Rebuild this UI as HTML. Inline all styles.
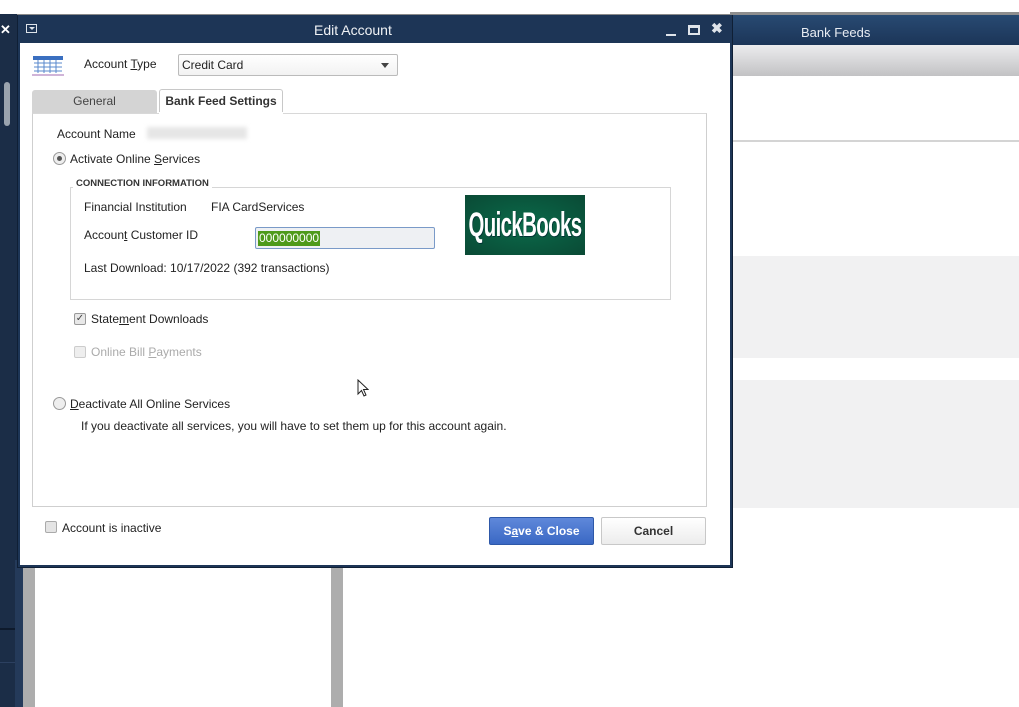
<!DOCTYPE html>
<html><head><meta charset="utf-8"><style>
*{margin:0;padding:0;box-sizing:border-box}
body{width:1019px;height:707px;position:relative;overflow:hidden;background:#fff;font-family:"Liberation Sans",Arial,sans-serif;font-size:12px;color:#222}
.a{position:absolute}
u{text-decoration:underline}
</style></head><body>
<div class="a" style="left:0;top:0;width:1019px;height:14px;background:#fff"></div>
<div class="a" style="left:0;top:14px;width:18px;height:693px;background:#1b2d47"></div>
<div class="a" style="left:0;top:22px;width:10px;height:20px;color:#fff;font-size:13px;font-weight:bold">✕</div>
<div class="a" style="left:4px;top:82px;width:6px;height:44px;background:#9aa3ae;border-radius:3px"></div>
<div class="a" style="left:0;top:628px;width:18px;height:2px;background:#0e1a2c"></div>
<div class="a" style="left:0;top:662px;width:18px;height:1px;background:#2c4060"></div>
<div class="a" style="left:15px;top:560px;width:8px;height:147px;background:#243a5a"></div>
<div class="a" style="left:23px;top:560px;width:12px;height:147px;background:#adadad"></div>
<div class="a" style="left:331px;top:560px;width:12px;height:147px;background:#adadad"></div>
<div class="a" style="left:730px;top:12px;width:289px;height:3px;background:#8e8e8e"></div>
<div class="a" style="left:730px;top:15px;width:289px;height:30px;background:linear-gradient(#284a72,#1c3558)"></div>
<div class="a" style="left:801px;top:25px;color:#e8ecf2;font-size:13px">Bank Feeds</div>
<div class="a" style="left:732px;top:45px;width:287px;height:31px;background:linear-gradient(#ececee,#c2c2c4)"></div>
<div class="a" style="left:732px;top:140px;width:287px;height:2px;background:#d4d4d4"></div>
<div class="a" style="left:732px;top:256px;width:287px;height:102px;background:#f1f1f2"></div>
<div class="a" style="left:732px;top:380px;width:287px;height:128px;background:#f1f1f2"></div>
<div class="a" style="left:17px;top:14px;width:716px;height:554px;background:#1d3556;border:1px solid #0f1f35"></div>
<div class="a" style="left:17px;top:14px;width:716px;height:1px;background:#8a8a8a"></div>
<div class="a" style="left:26px;top:24px;width:11px;height:9px;border:1px solid #dde3ea;"></div>
<div class="a" style="left:29px;top:27px;width:0;height:0;border-left:3px solid transparent;border-right:3px solid transparent;border-top:3px solid #dde3ea"></div>
<div class="a" style="left:314px;top:22px;color:#f0f2f5;font-size:14px">Edit Account</div>
<div class="a" style="left:666px;top:34px;width:10px;height:2px;background:#dfe4ea"></div>
<div class="a" style="left:688px;top:25px;width:12px;height:10px;border:2px solid #dfe4ea;border-top-width:3px"></div>
<div class="a" style="left:711px;top:20px;color:#dfe4ea;font-size:14px;font-weight:bold">✖</div>
<div class="a" style="left:20px;top:43px;width:710px;height:522px;background:#fff"></div>
<svg class="a" style="left:32px;top:54px" width="32" height="22"><rect x="1" y="2" width="30" height="4" fill="#3a6fc0"/><g stroke="#5a88cc" stroke-width="1"><line x1="2" y1="9" x2="30" y2="9"/><line x1="2" y1="13" x2="30" y2="13"/><line x1="2" y1="17" x2="30" y2="17"/><line x1="6" y1="6" x2="6" y2="19"/><line x1="12" y1="6" x2="12" y2="19"/><line x1="18" y1="6" x2="18" y2="19"/><line x1="24" y1="6" x2="24" y2="19"/></g><line x1="0" y1="21" x2="32" y2="21" stroke="#a06ab0"/></svg>
<div class="a" style="left:84px;top:57px">Account <u>T</u>ype</div>
<div class="a" style="left:178px;top:54px;width:220px;height:22px;border:1px solid #bbb;border-radius:2px;background:linear-gradient(#fff,#f2f2f2);padding:3px 0 0 3px;font-size:12px">Credit Card</div>
<div class="a" style="left:381px;top:63px;border-left:4px solid transparent;border-right:4px solid transparent;border-top:5px solid #444"></div>
<div class="a" style="left:32px;top:90px;width:125px;height:23px;background:#d4d4d4;border-radius:3px 3px 0 0;text-align:center;padding-top:4px;color:#444">General</div>
<div class="a" style="left:159px;top:89px;width:124px;height:25px;background:#fff;border:1px solid #c8c8c8;border-bottom:none;border-radius:3px 3px 0 0;text-align:center;padding-top:4px;font-weight:bold;color:#333">Bank Feed Settings</div>
<div class="a" style="left:32px;top:113px;width:675px;height:394px;border:1px solid #cfcfcf;border-top-color:#d8d8d8"></div>
<div class="a" style="left:159px;top:112px;width:124px;height:2px;background:#fff"></div>
<div class="a" style="left:57px;top:127px">Account Name</div>
<div class="a" style="left:147px;top:127px;width:100px;height:12px;background:#e6e6e6;filter:blur(2px)"></div>
<div class="a" style="left:53px;top:152px;width:13px;height:13px;border:1px solid #999;border-radius:50%;background:#eee"></div>
<div class="a" style="left:57px;top:156px;width:5px;height:5px;border-radius:50%;background:#555"></div>
<div class="a" style="left:70px;top:152px">Activate Online <u>S</u>ervices</div>
<div class="a" style="left:70px;top:187px;width:601px;height:113px;border:1px solid #d6d6d6"></div>
<div class="a" style="left:73px;top:178px;background:#fff;padding:0 3px;font-size:9.5px;font-weight:bold;color:#333">CONNECTION INFORMATION</div>
<div class="a" style="left:84px;top:200px">Financial Institution</div>
<div class="a" style="left:211px;top:200px">FIA CardServices</div>
<div class="a" style="left:84px;top:228px">Accoun<u>t</u> Customer ID</div>
<div class="a" style="left:255px;top:227px;width:180px;height:22px;border:1px solid #7a9ac8;border-radius:2px;background:#eef0f3"></div>
<div class="a" style="left:258px;top:231px;height:15px;background:#4e9a1a;color:#fff;padding:0 1px;font-size:12px;line-height:15px">000000000</div>
<div class="a" style="left:84px;top:261px">Last Download: 10/17/2022 (392 transactions)</div>
<div class="a" style="left:465px;top:195px;width:120px;height:60px;background:radial-gradient(#0b6a4a,#0a4a35);overflow:hidden">
<div style="position:absolute;left:-40px;top:0;width:200px;text-align:center;color:#fff;font-weight:bold;font-size:34px;line-height:60px;letter-spacing:-1px;transform:scaleX(0.6);text-shadow:1px 1px 0 #033">QuickBooks</div></div>
<div class="a" style="left:74px;top:313px;width:12px;height:12px;border:1px solid #999;border-radius:2px;background:#e8e8e8;font-size:10px;line-height:10px;text-align:center;color:#444">✓</div>
<div class="a" style="left:91px;top:312px">State<u>m</u>ent Downloads</div>
<div class="a" style="left:74px;top:346px;width:12px;height:12px;border:1px solid #ccc;border-radius:2px;background:#eee"></div>
<div class="a" style="left:91px;top:345px;color:#aaa">Online Bill <u>P</u>ayments</div>
<svg class="a" style="left:357px;top:379px" width="12" height="20"><path d="M1 1 L1 15 L4.5 11.5 L7 17 L9 16 L6.5 10.5 L11 10.5 Z" fill="#fff" stroke="#222"/></svg>
<div class="a" style="left:53px;top:397px;width:13px;height:13px;border:1px solid #999;border-radius:50%;background:#eee"></div>
<div class="a" style="left:70px;top:397px"><u>D</u>eactivate All Online Services</div>
<div class="a" style="left:81px;top:419px">If you deactivate all services, you will have to set them up for this account again.</div>
<div class="a" style="left:45px;top:521px;width:12px;height:12px;border:1px solid #aaa;border-radius:2px;background:#e4e4e4"></div>
<div class="a" style="left:62px;top:521px">Account is inactive</div>
<div class="a" style="left:489px;top:517px;width:105px;height:28px;border:1px solid #2e58a8;border-radius:2px;background:linear-gradient(#5f88da,#3a68c4);color:#fff;text-align:center;line-height:26px;font-weight:bold">S<u>a</u>ve &amp; Close</div>
<div class="a" style="left:601px;top:517px;width:105px;height:28px;border:1px solid #c8c8c8;border-radius:2px;background:linear-gradient(#fff,#ececec);color:#333;text-align:center;line-height:26px;font-weight:bold">Cancel</div>
</body></html>
